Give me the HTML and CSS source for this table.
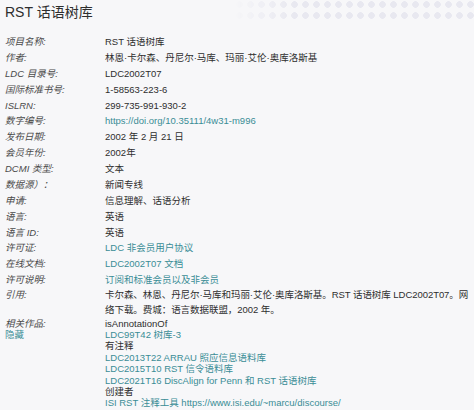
FILE: index.html
```html
<!DOCTYPE html>
<html lang="zh">
<head>
<meta charset="utf-8">
<link rel="stylesheet" href="styles.css">
</head>
<body>
<div class="page">
  <h1 class="title">RST 话语树库</h1>
  <div class="list">
    <div class="row"><div class="label">项目名称:</div><div class="value">RST 话语树库</div></div>
    <div class="row"><div class="label">作者:</div><div class="value">林恩·卡尔森、丹尼尔·马库、玛丽·艾伦·奥库洛斯基</div></div>
    <div class="row"><div class="label">LDC 目录号:</div><div class="value">LDC2002T07</div></div>
    <div class="row"><div class="label">国际标准书号:</div><div class="value">1-58563-223-6</div></div>
    <div class="row"><div class="label">ISLRN:</div><div class="value">299-735-991-930-2</div></div>
    <div class="row"><div class="label">数字编号:</div><div class="value"><a class="link" href="#">https://doi.org/10.35111/4w31-m996</a></div></div>
    <div class="row"><div class="label">发布日期:</div><div class="value">2002 年 2 月 21 日</div></div>
    <div class="row"><div class="label">会员年份:</div><div class="value">2002年</div></div>
    <div class="row"><div class="label">DCMI 类型:</div><div class="value">文本</div></div>
    <div class="row"><div class="label">数据源）：</div><div class="value">新闻专线</div></div>
    <div class="row"><div class="label">申请:</div><div class="value">信息理解、话语分析</div></div>
    <div class="row"><div class="label">语言:</div><div class="value">英语</div></div>
    <div class="row"><div class="label">语言 ID:</div><div class="value">英语</div></div>
    <div class="row"><div class="label">许可证:</div><div class="value"><a class="link" href="#">LDC 非会员用户协议</a></div></div>
    <div class="row"><div class="label">在线文档:</div><div class="value"><a class="link" href="#">LDC2002T07 文档</a></div></div>
    <div class="row"><div class="label">许可说明:</div><div class="value"><a class="link" href="#">订阅和标准会员以及非会员</a></div></div>
    <div class="row cite"><div class="label">引用:</div><div class="value">卡尔森、林恩、丹尼尔·马库和玛丽·艾伦·奥库洛斯基。RST 话语树库 LDC2002T07。网络下载。费城：语言数据联盟，2002 年。</div></div>
    <div class="row related">
      <div class="label"><div>相关作品:</div><a class="link plain" href="#">隐藏</a></div>
      <div class="value">
        <div>isAnnotationOf</div>
        <div><a class="link" href="#">LDC99T42 树库-3</a></div>
        <div>有注释</div>
        <div><a class="link" href="#">LDC2013T22 ARRAU 照应信息语料库</a></div>
        <div><a class="link" href="#">LDC2015T10 RST 信令语料库</a></div>
        <div><a class="link" href="#">LDC2021T16 DiscAlign for Penn 和 RST 话语树库</a></div>
        <div>创建者</div>
        <div><a class="link" href="#">ISI RST 注释工具 https://www.isi.edu/~marcu/discourse/</a></div>
      </div>
    </div>
  </div>
</div>
</body>
</html>
```
FILE: styles.css
```css
html, body {
  margin: 0;
  padding: 0;
}
body {
  background: #f7f7f9;
  font-family: "Liberation Sans", "Noto Sans CJK SC", sans-serif;
  font-size: 9.5px;
  color: #333;
  position: relative;
  overflow: hidden;
  height: 410px;
}
body::before {
  content: "";
  position: absolute;
  top: 0;
  right: 0;
  width: 240px;
  height: 22px;
  background-image: radial-gradient(circle at 5.5px 5.5px, #e8e8f0 3px, rgba(232,232,240,0) 3.6px);
  background-size: 11px 11px;
  background-position: 0 -1px;
  -webkit-mask-image: linear-gradient(to right, transparent 0, #000 60px);
  mask-image: linear-gradient(to right, transparent 0, #000 60px);
}
.page {
  position: relative;
  padding: 2px 0 0 5px;
}
.title {
  margin: 0;
  font-size: 14px;
  font-weight: normal;
  line-height: 20px;
  color: #2e2e2e;
}
.list {
  margin-top: 12px;
}
.row {
  display: grid;
  grid-template-columns: 100px 1fr;
  line-height: 15.87px;
}
.label {
  font-style: italic;
  color: #4a4a4a;
}
.value {
  color: #2e2e2e;
}
.cite .value {
  letter-spacing: -0.05px;
}
.link {
  color: #3a8d96;
  text-decoration: none;
}
.plain {
  font-style: normal;
}
.cite {
  line-height: 14.5px;
}
.related {
  line-height: 11.4px;
  padding-top: 0.5px;
}
```
